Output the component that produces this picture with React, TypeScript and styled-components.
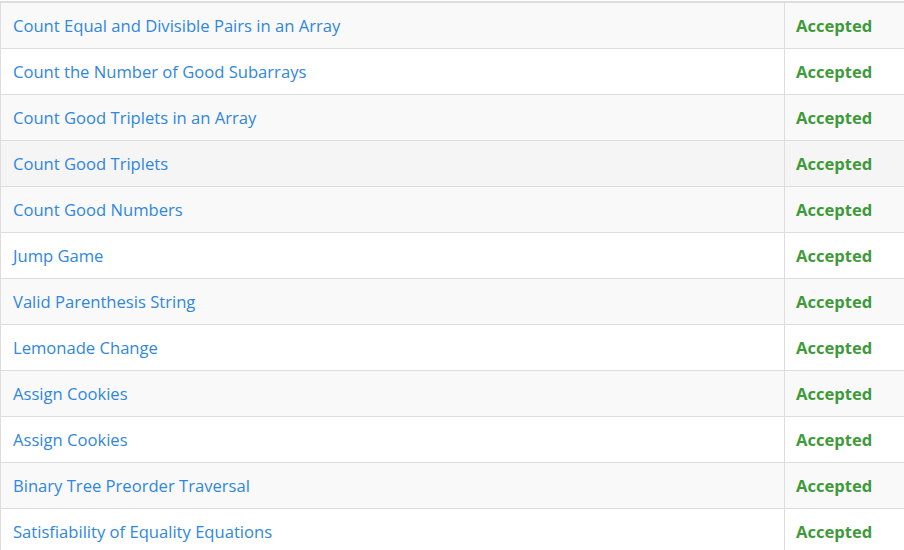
import React from "react";
import styled, { createGlobalStyle } from "styled-components";

const Global = createGlobalStyle`
  html, body { margin: 0; padding: 0; background: #fff; }
  body { font-family: "Open Sans", "Noto Sans", sans-serif; }
`;

const Wrap = styled.div`
  width: 904px;
  overflow: hidden;
  padding-top: 1px;
  background: #fff;
`;

const Table = styled.table`
  width: 960px;
  border-collapse: collapse;
  border-left: 1px solid #dddddd;
  border-top: 2px solid #dddddd;
  font-size: 16.6px;
`;

const Row = styled.tr<{ $bg: string }>`
  background: ${(p) => p.$bg};
  & > td { border-top: 1px solid #dddddd; }
  &:first-child > td { border-top: none; }
`;

const NameCell = styled.td`
  height: 45px;
  padding: 0 12px;
  width: 759px;
  border-right: 1px solid #dddddd;
  vertical-align: middle;
`;

const StatusCell = styled.td`
  padding: 0 11px;
  vertical-align: middle;
`;

const Link = styled.a`
  color: #2f87e0;
  text-decoration: none;
`;

const Status = styled.span`
  color: #3f9a3a;
  font-weight: 700;
`;

const rows = [
  "Count Equal and Divisible Pairs in an Array",
  "Count the Number of Good Subarrays",
  "Count Good Triplets in an Array",
  "Count Good Triplets",
  "Count Good Numbers",
  "Jump Game",
  "Valid Parenthesis String",
  "Lemonade Change",
  "Assign Cookies",
  "Assign Cookies",
  "Binary Tree Preorder Traversal",
  "Satisfiability of Equality Equations",
];

export default function App() {
  return (
    <Wrap>
      <Global />
      <Table>
        <tbody>
          {rows.map((name, i) => (
            <Row key={i} $bg={i === 3 ? "#f5f5f5" : i % 2 === 0 ? "#f9f9f9" : "#ffffff"}>
              <NameCell>
                <Link href="#">{name}</Link>
              </NameCell>
              <StatusCell>
                <Status>Accepted</Status>
              </StatusCell>
            </Row>
          ))}
        </tbody>
      </Table>
    </Wrap>
  );
}
